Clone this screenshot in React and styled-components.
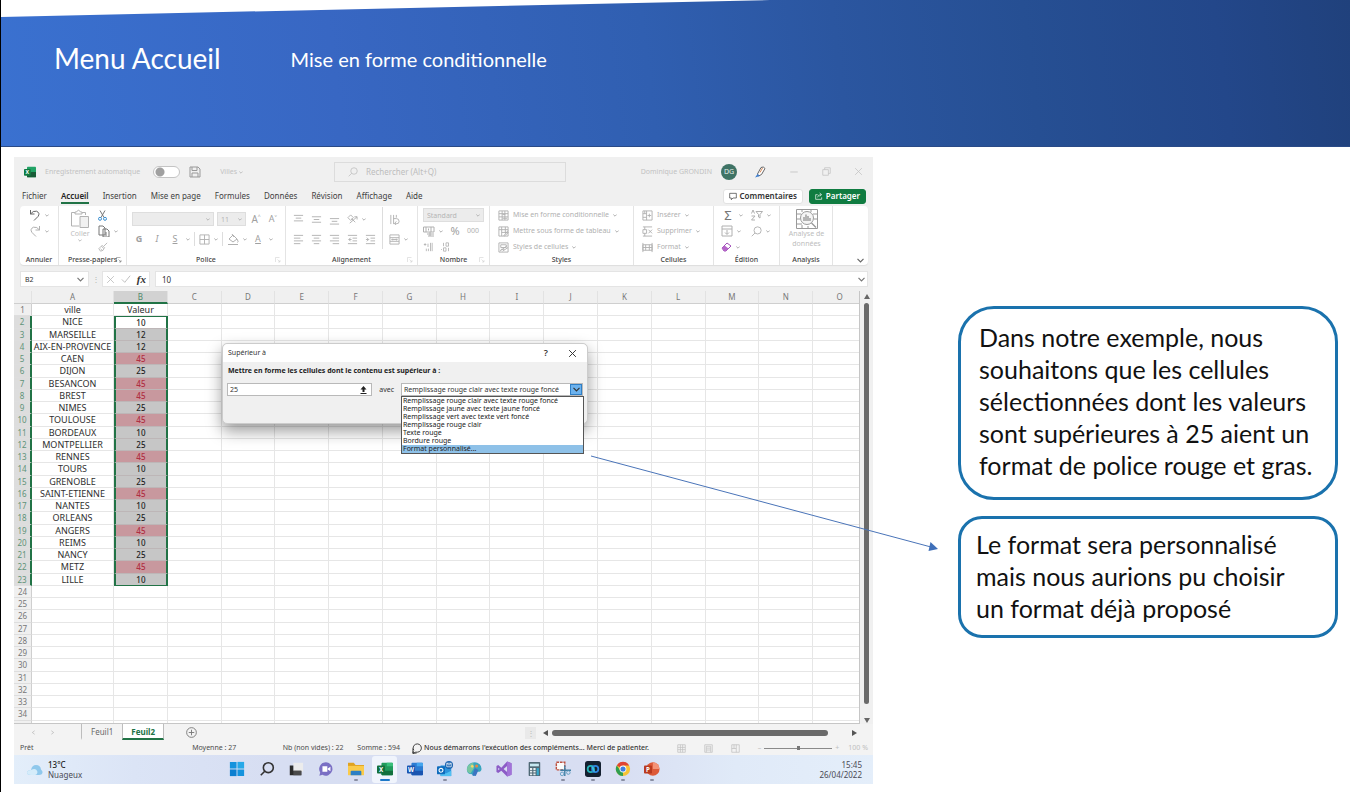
import React, { useState } from "react";
import styled, { createGlobalStyle } from "styled-components";

const GlobalStyle = createGlobalStyle`
  * {
    box-sizing: border-box;
  }
  body {
    margin: 0;
    background: #ffffff;
    font-family: "Noto Sans", "Open Sans", sans-serif;
  }
  button, input, select {
    font-family: inherit;
    margin: 0;
  }
`;

const Page = styled.div`
  min-height: 100vh;
  border-left: 1px solid #000000;
  overflow: hidden;
`;

const Header = styled.header`
  height: 147px;
  padding: 39px 53px 0;
  display: flex;
  align-items: flex-start;
  gap: 70px;
  color: #ffffff;
  font-family: Lato, "Open Sans", sans-serif;
  background: linear-gradient(
    83deg,
    #3a71d0 0%,
    #3867c3 25%,
    #305fb1 48%,
    #2b56a0 62%,
    #264f93 76%,
    #23478a 90%,
    #20417c 100%
  );
  border-bottom: 1px solid #2a4a86;
  clip-path: polygon(0 17px, 57% 0, 100% 0, 100% 100%, 0 100%);
`;

const Title = styled.h1`
  margin: 0;
  font-size: 28px;
  line-height: 38px;
  font-weight: 400;
`;

const Subtitle = styled.p`
  margin: 0;
  font-size: 20px;
  line-height: 40px;
`;

const Main = styled.main`
  display: grid;
  grid-template-columns: minmax(0, 859fr) minmax(0, 380fr);
  column-gap: 85px;
  padding: 10px 12px 8px 13px;
`;

/* Right side notes */

const Notes = styled.aside`
  padding-top: 149px;
  display: flex;
  flex-direction: column;
  gap: 16px;
`;

const Note = styled.p`
  margin: 0;
  padding: ${(props) => (props.$large ? "12px 16px 16px 18px" : "9px 15px 11px")};
  border: 3px solid #1a72ad;
  border-radius: ${(props) => (props.$large ? 36 : 24)}px;
  color: #111111;
  font-family: Lato, "Open Sans", sans-serif;
  font-size: 25px;
  line-height: 32px;
  white-space: nowrap;
`;

/* Excel window */

const Window = styled.section`
  background: #f0f0f0;
  color: #3b3b3b;
  font-size: 8px;
  line-height: 12px;
  white-space: nowrap;
  align-self: start;
`;

const TitleBar = styled.div`
  height: 29px;
  display: grid;
  grid-template-columns: 320fr 232fr 307fr;
  align-items: center;
  color: #c2c2c2;
  font-size: 7px;
`;

const TitleSide = styled.div`
  display: flex;
  align-items: center;
  gap: 9px;
  padding: 0 10px;
  justify-content: ${(props) => (props.$end ? "flex-end" : "flex-start")};
`;

const AutoSave = styled.label`
  display: flex;
  align-items: center;
  gap: 13px;
`;

const Toggle = styled.input`
  appearance: none;
  width: 27px;
  height: 12px;
  border: 1px solid #c4c4c4;
  border-radius: 6px;
  background: radial-gradient(circle at 6px 5px, #a0a0a0 4px, #ffffff 5px);
`;

const FileName = styled.span`
  margin-left: 10px;
`;

const Search = styled.label`
  height: 20px;
  display: flex;
  align-items: center;
  gap: 8px;
  padding: 0 13px;
  border: 1px solid #dcdcdc;
  input {
    flex: 1;
    min-width: 0;
    border: 0;
    padding: 0;
    background: none;
    font-size: 8px;
    outline: none;
  }
  input::placeholder {
    color: #bdbdbd;
  }
`;

const Avatar = styled.span`
  width: 16px;
  height: 16px;
  border-radius: 50%;
  background: #3f7365;
  color: #e6efec;
  text-align: center;
  line-height: 16px;
`;

const WindowButtons = styled.div`
  display: flex;
  gap: 23px;
  margin-left: 8px;
`;

const IconButton = styled.button`
  padding: 0;
  border: 0;
  background: none;
  color: inherit;
  display: flex;
  align-items: center;
  gap: 4px;
  font-size: inherit;
  line-height: inherit;
`;

const Tabs = styled.nav`
  height: 20px;
  padding: 0 7px 0 8px;
  display: flex;
  align-items: center;
  gap: 14px;
`;

const Tab = styled.a`
  color: ${(props) => (props.$active ? "#262626" : "#3f3f3f")};
  font-weight: ${(props) => (props.$active ? 600 : 400)};
  border-bottom: 2px solid ${(props) => (props.$active ? "#217346" : "transparent")};
  padding-top: 2px;
  text-decoration: none;
`;

const TabActions = styled.div`
  margin-left: auto;
  display: flex;
  gap: 6px;
`;

const ActionButton = styled.button`
  height: 15px;
  padding: 0 5px;
  display: flex;
  align-items: center;
  gap: 3px;
  border: 1px solid ${(props) => (props.$primary ? "#107c41" : "#e2e2e2")};
  border-radius: 3px;
  background: ${(props) => (props.$primary ? "#107c41" : "#ffffff")};
  color: ${(props) => (props.$primary ? "#ffffff" : "#333333")};
  font-size: 8px;
  line-height: 12px;
  font-weight: 600;
`;

const Ribbon = styled.div`
  height: 59px;
  margin: 0 5px 0 6px;
  display: grid;
  grid-template-columns:
    minmax(0, 39fr) minmax(0, 68fr) minmax(0, 159fr) minmax(0, 132fr) minmax(0, 72fr)
    minmax(0, 144fr) minmax(0, 80fr) minmax(0, 66fr) minmax(0, 53fr) minmax(0, 35fr);
  background: #ffffff;
  border-radius: 4px;
  box-shadow: 0 1px 1px #dddddd;
`;

const Group = styled.div`
  position: relative;
  display: flex;
  flex-direction: column;
  padding-top: 1px;
  color: #b0b0b0;
  border-right: ${(props) => (props.$last ? "0" : "1px solid #e4e4e4")};
`;

const GroupBody = styled.div`
  height: 48px;
  padding-left: ${(props) => props.$pad || 6}px;
  display: flex;
  gap: ${(props) => props.$gap || 6}px;
  font-size: 7px;
`;

const Rows = styled.div`
  display: flex;
  flex-direction: column;
  padding-top: ${(props) => (props.$tall ? 2 : 0)}px;
`;

const Row = styled.div`
  height: ${(props) => (props.$tall ? 20 : 16)}px;
  display: flex;
  align-items: center;
  gap: ${(props) => props.$gap || 4}px;
`;

const GroupLabel = styled.div`
  height: 10px;
  color: #444444;
  font-size: 7px;
  font-weight: 500;
  line-height: 10px;
  text-align: center;
`;

const Launcher = styled.span`
  position: absolute;
  right: 4px;
  bottom: 2px;
  display: flex;
  color: ${(props) => (props.$on ? "#666666" : "#c9c9c9")};
`;

const BigButton = styled.button`
  width: ${(props) => props.$width}px;
  padding: 2px 0 0;
  border: 0;
  background: none;
  color: #bdbdbd;
  display: flex;
  flex-direction: column;
  align-items: center;
  font-size: 7px;
  line-height: 10px;
`;

const Combo = styled.label`
  width: ${(props) => props.$width}px;
  height: 14px;
  padding: 0 3px;
  display: flex;
  align-items: center;
  border: 1px solid #dedede;
  background: #ececec;
  color: #b5b5b5;
  input {
    flex: 1;
    min-width: 0;
    padding: 0;
    border: 0;
    background: none;
    color: inherit;
    font-size: 7px;
  }
`;

const Letter = styled.span`
  width: 14px;
  text-align: center;
  font-size: ${(props) => props.$size || 9}px;
  color: ${(props) => (props.$dark ? "#777777" : "#a0a0a0")};
  font-weight: ${(props) => (props.$bold ? 700 : 400)};
  font-style: ${(props) => (props.$italic ? "italic" : "normal")};
  text-decoration: ${(props) => (props.$underline ? "underline" : "none")};
`;

const Divider = styled.span`
  width: 1px;
  height: ${(props) => props.$height}px;
  background: #dddddd;
`;

const FormulaBar = styled.div`
  height: 26px;
  padding: 6px 5px 4px 6px;
  display: flex;
  gap: 5px;
  align-items: stretch;
  color: #b5b5b5;
`;

const Dots = styled.span`
  width: 3px;
  line-height: 16px;
  display: flex;
  justify-content: center;
`;

const NameBox = styled.label`
  width: 69px;
  padding: 0 4px;
  display: flex;
  align-items: center;
  background: #ffffff;
  border: 1px solid #e4e4e4;
  color: #777777;
  input {
    flex: 1;
    min-width: 0;
    padding: 0;
    border: 0;
    font-size: 7px;
    color: #333333;
  }
`;

const FxBox = styled.div`
  width: 48px;
  display: flex;
  align-items: center;
  justify-content: space-around;
  background: #ffffff;
  border: 1px solid #e4e4e4;
  em {
    color: #333333;
    font-family: "Liberation Serif", serif;
    font-size: 11px;
    font-weight: 700;
  }
`;

const FormulaField = styled(NameBox)`
  flex: 1;
  padding: 0 2px 0 6px;
  input {
    font-size: 8px;
  }
`;

const SheetArea = styled.div`
  position: relative;
  height: 433px;
  display: flex;
`;

const GridClip = styled.div`
  flex: 1;
  min-width: 0;
  overflow: hidden;
  background: #ffffff;
  border-right: 1px solid #c6c6c6;
  border-bottom: 1px solid #c6c6c6;
`;

const Table = styled.table`
  width: calc(100% + 8px);
  table-layout: fixed;
  border-collapse: separate;
  border-spacing: 0;
  tbody tr {
    height: 12px;
  }
  tbody tr:nth-child(4n + 2) {
    height: 13px;
  }
`;

const Col = styled.col`
  width: ${(props) => props.$width}px;
`;

const ColHead = styled.th`
  height: 13px;
  padding: 0;
  background: ${(props) => (props.$selected ? "#d2d2d2" : "#f0f0f0")};
  border-right: 1px solid #e2e2e2;
  border-bottom: ${(props) => (props.$selected ? "2px solid #217346" : "1px solid #cfcfcf")};
  color: ${(props) => (props.$selected ? "#4f8a6b" : "#777777")};
  font-size: 8px;
  font-weight: 400;
  line-height: 10px;
`;

const RowHead = styled.th`
  padding: 0;
  background: ${(props) => (props.$selected ? "#dddddd" : "#f0f0f0")};
  border-right: ${(props) => (props.$selected ? "2px solid #217346" : "1px solid #cfcfcf")};
  border-bottom: 1px solid #dedede;
  color: ${(props) => (props.$selected ? "#5f9378" : "#777777")};
  font-size: 8px;
  font-weight: 400;
  line-height: 10px;
`;

const Cell = styled.td`
  padding: 0;
  border-right: 1px solid #e6e6e6;
  border-bottom: 1px solid #e6e6e6;
  color: #2e2e2e;
  font-size: ${(props) => (props.$text ? 9 : 8)}px;
  line-height: 10px;
  text-align: center;
`;

const cellFill = { first: "#ffffff", plain: "#c6c6c6", high: "#c8989e" };

const SelectedCell = styled(Cell)`
  background: ${(props) => cellFill[props.$kind]};
  color: ${(props) => (props.$kind === "high" ? "#b02f42" : "#222222")};
  font-weight: 500;
  border-left: 2px solid #217346;
  border-right: 2px solid #217346;
  border-top: ${(props) => (props.$kind === "first" ? "1px solid #217346" : "0")};
  border-bottom-color: ${(props) => (props.$end ? "#217346" : "#bdb6b7")};
`;

const VScroll = styled.div`
  width: 13px;
  padding: 3px 0 0;
  display: flex;
  flex-direction: column;
  align-items: center;
  gap: 3px;
  color: #666666;
`;

const VThumb = styled.span`
  width: 5px;
  height: 401px;
  margin-bottom: auto;
  border-radius: 3px;
  background: #6a6a6a;
`;

/* Dialog over the sheet */

const Dialog = styled.div`
  position: absolute;
  left: 208px;
  top: 52px;
  width: 366px;
  height: 81px;
  border: 1px solid #cccccc;
  border-radius: 5px;
  background: #f0f0f0;
  color: #333333;
  font-size: 7px;
  box-shadow: 0 7px 16px rgba(0, 0, 0, 0.4);
`;

const DialogTitle = styled.div`
  height: 18px;
  padding: 0 10px 0 5px;
  display: flex;
  align-items: center;
  gap: 20px;
  background: #ffffff;
  border-radius: 5px 5px 0 0;
  span {
    flex: 1;
  }
`;

const HelpButton = styled(IconButton)`
  font-size: 9px;
  font-weight: 600;
`;

const DialogText = styled.p`
  margin: 3px 5px 6px;
  color: #222222;
  font-weight: 700;
`;

const DialogRow = styled.form`
  padding: 0 4px;
  display: flex;
  align-items: center;
  gap: 7px;
`;

const Field = styled.label`
  width: ${(props) => props.$width}px;
  height: 13px;
  display: flex;
  align-items: stretch;
  background: #ffffff;
  border: 1px solid #b9b9b9;
  input,
  select {
    appearance: none;
    flex: 1;
    min-width: 0;
    padding: 0 2px;
    border: 0;
    background: none;
    color: #333333;
    font-size: 7px;
    line-height: 11px;
  }
`;

const FieldButton = styled.span`
  width: ${(props) => (props.$blue ? 12 : 16)}px;
  display: flex;
  align-items: center;
  justify-content: center;
  background: ${(props) => (props.$blue ? "#6cb2ee" : "transparent")};
  border: ${(props) => (props.$blue ? "1px solid #2f7fc6" : "0")};
`;

const Options = styled.ul`
  position: absolute;
  left: 178px;
  top: 52px;
  width: 183px;
  margin: 0;
  padding: 0;
  list-style: none;
  border: 1px solid #555555;
  background: #ffffff;
`;

const Option = styled.li`
  padding: 0 1px;
  line-height: 8px;
  color: #222222;
  background: ${(props) => (props.$active ? "#8ec1e8" : "transparent")};
`;

const Arrow = styled.svg`
  position: absolute;
  left: 577px;
  top: 163px;
  width: 348px;
  height: 98px;
`;

/* Bottom bars */

const SheetTabs = styled.div`
  height: 17px;
  display: grid;
  grid-template-columns: 511fr 348fr;
  background: #f3f3f3;
`;

const SheetList = styled.div`
  display: flex;
  align-items: center;
  padding-left: 16px;
  gap: 12px;
  color: #a9a9a9;
`;

const SheetButtons = styled.div`
  align-self: stretch;
  display: flex;
  margin: 0 10px 0 13px;
`;

const SheetTab = styled.button`
  margin: 0 0 1px;
  padding: 2px ${(props) => (props.$active ? 8 : 9)}px 0;
  border: 0;
  border-left: 1px solid #bdbdbd;
  border-right: ${(props) => (props.$active ? "1px solid #bdbdbd" : "0")};
  border-bottom: 2px solid ${(props) => (props.$active ? "#217346" : "transparent")};
  background: ${(props) => (props.$active ? "#ffffff" : "none")};
  color: ${(props) => (props.$active ? "#217346" : "#6a6a6a")};
  font-size: 8px;
  line-height: 12px;
  font-weight: ${(props) => (props.$active ? 700 : 400)};
`;

const HScroll = styled.div`
  display: flex;
  align-items: center;
  gap: 3px;
  padding-right: 15px;
  color: #555555;
`;

const HThumb = styled.span`
  flex: 1;
  height: 6px;
  margin-right: 21px;
  border-radius: 3px;
  background: #6a6a6a;
`;

const HGrip = styled.span`
  width: 11px;
  height: 12px;
  margin-right: 4px;
  background: #e9e9e9;
  color: #bbbbbb;
  text-align: center;
`;

const StatusBar = styled.div`
  height: 14px;
  padding-left: 6px;
  display: grid;
  grid-template-columns: 173fr 91fr 75fr 55fr 266fr 193fr;
  align-items: center;
  background: #f3f3f3;
  color: #4c4c4c;
  font-size: 7px;
`;

const StatusMessage = styled.span`
  display: flex;
  align-items: center;
  gap: 1px;
  font-weight: 500;
  color: #333333;
`;

const StatusTools = styled.div`
  display: flex;
  align-items: center;
  gap: 18px;
  padding-right: 5px;
  color: #c0c0c0;
`;

const Zoom = styled.label`
  flex: 1;
  display: flex;
  align-items: center;
  justify-content: flex-end;
  gap: 3px;
  input {
    appearance: none;
    width: 68px;
    height: 1px;
    background: #8a8a8a;
  }
  input::-webkit-slider-thumb {
    appearance: none;
    width: 3px;
    height: 4px;
    background: #777777;
  }
  output {
    margin-left: 6px;
  }
`;

const TaskBar = styled.footer`
  height: 29px;
  padding: 0 11px 0 12px;
  display: grid;
  grid-template-columns: 1fr auto 1fr;
  align-items: center;
  font-size: 8px;
  line-height: 10px;
  color: #4a4a55;
  background: linear-gradient(90deg, #e3eefa 0%, #dbe4f6 14%, #d7def2 30%, #d8def2 70%, #e0eaf8 84%, #e4eefa 100%);
`;

const Weather = styled.div`
  display: flex;
  align-items: center;
  gap: 4px;
  strong {
    display: block;
    font-weight: 500;
    color: #222222;
  }
`;

const Apps = styled.div`
  display: flex;
  gap: 5px;
`;

const AppButton = styled.button`
  width: 25px;
  height: 27px;
  margin-right: ${(props) => (props.$odd ? -1 : 0)}px;
  padding: 5px 0 0;
  border: 0;
  border-radius: 3px;
  display: flex;
  flex-direction: column;
  align-items: center;
  gap: 2px;
  background: ${(props) => (props.$active ? "#f0f4fc" : "none")};
  &::after {
    content: "";
    width: ${(props) => (props.$active ? 10 : 4)}px;
    height: 2px;
    border-radius: 1px;
    background: ${(props) => (props.$active ? "#1c78c8" : props.$open ? "#8a8fa3" : "transparent")};
  }
`;

const Clock = styled.time`
  text-align: right;
`;

const Caret = () => (
  <svg width="4" height="3" viewBox="0 0 4 3" fill="none" stroke="currentColor">
    <path d="M0.3 0.5 2 2.2 3.7 0.5" />
  </svg>
);

const Chevron = () => (
  <svg width="7" height="5" viewBox="0 0 7 5" fill="none" stroke="currentColor" strokeWidth="1.2">
    <path d="M0.5 0.8 3.5 3.8 6.5 0.8" />
  </svg>
);

const triangles = {
  up: "M3 0 6 5H0z",
  down: "M3 5 6 0H0z",
  left: "M0 3 5 0V6z",
  right: "M5 3 0 0V6z",
};

const Triangle = ({ dir }) => (
  <svg width="6" height="6" viewBox="0 0 6 6" fill="currentColor">
    <path d={triangles[dir]} />
  </svg>
);

const lines = {
  top: "M1 1.5H11M3 4.5H9M1 7.5H11",
  middle: "M1 3H11M3 6H9M1 9H11",
  bottom: "M1 5H11M3 8H9M1 11H11",
  alignLeft: "M1 1.5H11M1 4.5H8M1 7.5H11M1 10.5H8",
  alignCenter: "M1 1.5H11M3 4.5H9M1 7.5H11M3 10.5H9",
  alignRight: "M1 1.5H11M4 4.5H11M1 7.5H11M4 10.5H11",
  outdent: "M1 1.5H11M6 4.5H11M6 7.5H11M1 10.5H11M4 4 2 6 4 8M2 6H5",
  indent: "M1 1.5H11M6 4.5H11M6 7.5H11M1 10.5H11M2 4 4 6 2 8M1 6H4",
  orient: "M1 4 4 1 7 4 4 7zM3 10 11 3M11 3H8M11 3V6M5 5 9 9",
  wrap: "M2 1V11M5 1V11M5 5H8Q11 5 11 8T8 10.5H6M8 8 6 10.5 8 12M8 1V4",
  merge: "M1 1H11V11H1zM1 4H11M1 8H11M3 6H9M4 5 3 6 4 7M8 5 9 6 8 7",
  borders: "M1 1H11V11H1zM6 1V11M1 6H11",
  save: "M1 1H9L11 3V11H1zM3 1V4.5H8V1M3 11V7H9V11",
  undo: "M1.5 1V5H5.5M1.5 5Q4 1.5 7.5 2.2Q11.5 4 9 7.5L5 11.5",
  redo: "M10.5 1V5H6.5M10.5 5Q8 1.5 4.5 2.2Q0.5 4 3 7.5L7 11.5",
  copy: "M1 1H5L7 3V10H1zM5 4H9L11 6V12H5zM7 8H9M7 10H9",
  brush: "M11 1 7 5M5 4 8 7 7 8 4 5zM4 5 1 8 3 11 6 10 7 8M3 8 4.5 9.5",
  fill: "M2 6 6 2 10 6 6 9zM5 1 7 4M10 6Q12 9 10.5 9.5M1 11.5H11",
  money: "M0.5 2H11V7H0.5zM3 2V7M8 2V7M5.5 3.5V5.5M4 9H11M5 11H11M7 7V11",
  decMore: "M1 3H4M2.5 1.5V4.5M6 2V6M9 1V11M11 1V11M4 8V11M6.5 8V11",
  decLess: "M3 1V5M6 1V5H9V1H6M3 7V11H6V7zM9 7V11M1 9H0",
  cond: "M1 1H11V11H1zM1 4H11M1 7.5H11M4.5 1V11M7.5 1V11M5 5H8M5 9H10",
  table: "M1 1H11V11H1zM1 4H11M4 1V11M8 1V8M4 7H11M6 11 11 5M7 11 11.5 7",
  cellStyle: "M1 1H11V11H1zM3 3H9V6H3zM2 10 10 4M5 10 11 6M3 8H7",
  insert: "M1 1H11V11H1zM1 4H5M1 8H5M5 1V11M8 4V8M6 6H10M3 1V4",
  remove: "M1 1H11M1 11H11M1 4H5V8H1zM7 4 11 8M11 4 7 8M3 1V4M3 8V11",
  format: "M1 1V11M11 1V11M1 3H11V9H1zM4 3V9M8 3V9M1 6H11",
  fillDown: "M1 1H11V11H1zM1 4H11M6 5V9M4 7.5 6 9.5 8 7.5",
  comment: "M1 2H11V9H6L3.5 11.5V9H1z",
  share: "M4 4H1V11H10V8M4 8Q4 4 9 4M7 1.5 10 4 7 6.5",
  close: "M1.5 1.5 10.5 10.5M10.5 1.5 1.5 10.5",
  minimize: "M1.5 6H10.5",
  restore: "M1 3.5H8.5V11H1zM3.5 3.5V1H11V8.5H8.5",
  check: "M1 6.5 4.5 10 11 2",
  launcher: "M1 10V1H9M5 5 10 10M10 6V10H6",
  grid: "M1 1H11V11H1zM1 4.5H11M1 7.5H11M4.5 1V11M7.5 1V11",
  pageView: "M1 1H11V11H1zM3 3H9V11M3 3V11M3 5.5H9M3 8H9",
  breakView: "M1 11V1H11V11zM1 6H7V1M7 6V11M4 1V6",
  plus: "M6 3V9M3 6H9M11.3 6A5.3 5.3 0 1 1 0.7 6A5.3 5.3 0 1 1 11.3 6",
  chatLoad: "M2 8A4.5 4.5 0 1 1 6 10H4L1 11.5 1.5 9M1 6V11H5",
  prev: "M8 3 4 6 8 9",
  next: "M4 3 8 6 4 9",
};

const Line = ({ name, size = 10, width = 1, color = "currentColor" }) => (
  <svg width={size} height={size} viewBox="0 0 12 12" fill="none" stroke={color} strokeWidth={width}>
    <path d={lines[name]} />
  </svg>
);

const SearchIcon = ({ size = 10, color = "currentColor", width = 1 }) => (
  <svg width={size} height={size} viewBox="0 0 12 12" fill="none" stroke={color} strokeWidth={width}>
    <circle cx="7.2" cy="4.8" r="3.9" />
    <path d="M4.4 7.6 0.8 11.2" />
  </svg>
);

const Paste = () => (
  <svg width="20" height="20" viewBox="0 0 20 20" fill="none" stroke="#b2b2b2">
    <path d="M9 17H1.5V3.5H5M12 3.5H15.5V6M5 5V3H6.5Q8.5 -0.5 10.5 3H12V5z" />
    <path d="M10 7.5H18.5V18.5H10z" fill="#f1f1f1" />
  </svg>
);

const Scissors = () => (
  <svg width="9" height="11" viewBox="0 0 9 11" fill="none">
    <path d="M2 0.5 6 7.5M7 0.5 3 7.5" stroke="#777777" />
    <circle cx="2" cy="8.8" r="1.5" stroke="#3b8fd0" />
    <circle cx="7" cy="8.8" r="1.5" stroke="#3b8fd0" />
  </svg>
);

const Eraser = () => (
  <svg width="11" height="10" viewBox="0 0 11 10">
    <path d="M1 6 6 1 10 4 5 9H3z" fill="#ffffff" stroke="#a14fb8" />
    <path d="M1 6 3.5 3.5 7.5 6.5 5 9H3z" fill="#b565c9" />
  </svg>
);

const SortFilter = () => (
  <svg width="12" height="12" viewBox="0 0 12 12" fill="none" stroke="currentColor">
    <path d="M0.5 4.5 2 1 3.5 4.5M0.5 7H4L0.5 11H4M5 2.5H11.5L9 5.5V9L7.5 8V5.5z" />
  </svg>
);

const AnalyseIcon = () => (
  <svg width="22" height="20" viewBox="0 0 22 20" fill="none" stroke="#9a9a9a">
    <path d="M0.5 0.5H21.5V19.5H0.5zM0.5 5H5M0.5 10H4M0.5 15H6M17 5H21.5M18 10H21.5M6 0.5V3M15 0.5V3M6 16V19.5M12 17V19.5" />
    <circle cx="11" cy="9" r="6.5" fill="#f5f5f5" />
    <path d="M8 12V8M10 12V5.5M12 12V7M14 12V9M15.5 14 20 18.5" strokeWidth="1.4" />
  </svg>
);

const Pen = () => (
  <svg width="12" height="12" viewBox="0 0 12 12" fill="none">
    <path d="M3.5 8 7 1.5Q9.5 0 11 2.5L7.5 8.5 4.5 10z" fill="#ffffff" stroke="#666666" />
    <path d="M1 11.5 3.5 8 6 10z" fill="#3f7fd0" />
    <path d="M8.5 2 6 6.5" stroke="#d88a5a" />
  </svg>
);

const ExcelLogo = () => (
  <svg width="12" height="12" viewBox="0 0 16 16">
    <rect x="4" y="1" width="12" height="14" rx="1" fill="#21a366" />
    <path d="M10 8H16V15H4V11z" fill="#185c37" />
    <rect x="0" y="4" width="9" height="9" rx="1" fill="#107c41" />
    <text x="4.5" y="11" fontSize="7" fontWeight="700" textAnchor="middle" fill="#ffffff">X</text>
  </svg>
);

const OfficeIcon = ({ letter, dark, mid, light, round }) => (
  <>
    {round ? (
      <>
        <circle cx="10" cy="9" r="7.5" fill={mid} />
        <path d="M10 1.5A7.5 7.5 0 0 1 17.5 9H10z" fill={light} />
      </>
    ) : (
      <>
        <rect x="5" y="2" width="13" height="14" rx="1" fill={mid} />
        <path d="M11 2H17Q18 2 18 3V6H11z" fill={light} />
        <path d="M5 11H18V15Q18 16 17 16H6Q5 16 5 15z" fill={dark} />
      </>
    )}
    <rect x="0" y="5" width="9" height="9" rx="1" fill={dark} />
    <text x="4.5" y="12" fontSize="7" fontWeight="700" textAnchor="middle" fill="#ffffff">{letter}</text>
  </>
);

const apps = [
  {
    name: "Démarrer",
    art: (
      <>
        <path d="M1 1H8.5V8.5H1zM9.5 9.5H17V17H9.5z" fill="#1593dd" />
        <path d="M9.5 1H17V8.5H9.5z" fill="#27a9e8" />
        <path d="M1 9.5H8.5V17H1z" fill="#0c7fd0" />
      </>
    ),
  },
  {
    name: "Rechercher",
    art: (
      <g fill="none" stroke="#333333" strokeWidth="1.8">
        <circle cx="10.5" cy="7.5" r="5.6" />
        <path d="M6.5 11.5 2 16" />
      </g>
    ),
  },
  {
    name: "Bureaux",
    art: (
      <>
        <path d="M6 2H17V12H6z" fill="#ececec" />
        <path d="M2 5H6V11H15V16H2z" fill="#2c2c2c" />
        <path d="M6 11H15V16H6z" fill="#4a4a4a" />
      </>
    ),
  },
  {
    name: "Conversation",
    art: (
      <>
        <path d="M9 1.5A7.5 7.5 0 1 1 5 15.5L1.5 16.5 2.5 13A7.5 7.5 0 0 1 9 1.5z" fill="#7a6fc4" />
        <path d="M5 6H10.5V12H5zM11 8.5 14 6.5V11.5L11 9.5z" fill="#ffffff" />
      </>
    ),
  },
  {
    name: "Explorateur",
    open: true,
    art: (
      <>
        <path d="M0 2H6.5L8.5 4.5H18V8H0z" fill="#e0a321" />
        <path d="M0 5.5H18V16H0z" fill="#fbcb4a" />
        <path d="M3 16V12Q3 11 4 11H14Q15 11 15 12V16z" fill="#2b7fc4" />
      </>
    ),
  },
  {
    name: "Excel",
    open: true,
    active: true,
    art: <OfficeIcon letter="X" dark="#12703d" mid="#219b5c" light="#39bf7b" />,
  },
  {
    name: "Word",
    art: <OfficeIcon letter="W" dark="#1a54b0" mid="#2b7cd3" light="#44a5ee" />,
  },
  {
    name: "Outlook",
    open: true,
    art: (
      <>
        <path d="M4 5H16V17H4z" fill="#2b94dd" />
        <path d="M4 11 10 14 16 11V17H4z" fill="#51c0f2" />
        <rect x="0" y="6" width="9" height="9" rx="1" fill="#0f6cbd" />
        <circle cx="4.5" cy="10.5" r="2.2" fill="none" stroke="#ffffff" strokeWidth="1.2" />
        <circle cx="13.5" cy="4.5" r="4.5" fill="#155fae" />
        <path d="M11 2.5H16V6.5H11zM11 2.5 13.5 4.8 16 2.5" fill="none" stroke="#ffffff" strokeWidth="0.8" />
      </>
    ),
  },
  {
    name: "Paint 3D",
    art: (
      <>
        <path d="M1 9Q2 1.5 10 1.5Q17 2.5 17.5 9Q17 13 12 12L10 16Q8 18 7 15Q0.5 15 1 9z" fill="#37a5bd" />
        <path d="M1 9Q2 3 8 2L9 8 5 14Q1 13 1 9z" fill="#78c6a0" />
        <circle cx="12" cy="5.5" r="1.7" fill="#e58845" />
        <path d="M10 8 14 10 11 17 7 16z" fill="#3b75c1" />
        <circle cx="7" cy="6" r="1.5" fill="#f4d66a" />
      </>
    ),
  },
  {
    name: "Visual Studio",
    art: (
      <>
        <path
          d="M12.5 0.5 17.5 2.5V15.5L12.5 17.5 6 11 2.5 13.5 0.5 12.5V5.5L2.5 4.5 6 7.5zM12.5 5.5 8.5 9 12.5 12.5zM2.5 7.5V10.5L4.2 9z"
          fill="#8c5cc6"
          fillRule="evenodd"
        />
        <path d="M12.5 0.5 17.5 2.5V15.5L12.5 17.5z" fill="#a273d8" />
      </>
    ),
  },
  {
    name: "Calculatrice",
    art: (
      <>
        <rect x="3" y="1" width="13" height="16" rx="1" fill="#4f6875" />
        <path d="M4.5 3H14.5V6H4.5z" fill="#c5e7f0" />
        <path d="M4.5 8H7V10H4.5zM8.3 8H10.8V10H8.3zM4.5 11H7V13H4.5zM8.3 11H10.8V13H8.3zM4.5 14H7V16H4.5zM8.3 14H10.8V16H8.3z" fill="#e7eef1" />
        <path d="M12 8H14.5V16H12z" fill="#37a8cc" />
      </>
    ),
  },
  {
    name: "Capture",
    open: true,
    art: (
      <>
        <path d="M1.5 1.5H11V10H1.5z" fill="#fafafa" stroke="#bd5140" strokeDasharray="3 1" strokeWidth="1.6" />
        <path d="M11 5V17M6 10.5H18" stroke="#427fa4" strokeWidth="1.6" />
        <circle cx="8" cy="14.5" r="2" fill="none" stroke="#5b9bc0" />
        <circle cx="15" cy="13" r="2" fill="none" stroke="#5b9bc0" />
      </>
    ),
  },
  {
    name: "Webex",
    open: true,
    art: (
      <>
        <rect x="0" y="0" width="18" height="18" rx="3" fill="#142030" />
        <circle cx="6.5" cy="9" r="3.5" fill="none" stroke="#27b4b8" strokeWidth="2" />
        <circle cx="11.5" cy="9" r="3.5" fill="none" stroke="#2f86e0" strokeWidth="2" />
        <path d="M8 6.5Q9.5 9 10.5 12" fill="none" stroke="#3bc0dc" strokeWidth="1.8" />
      </>
    ),
  },
  {
    name: "Chrome",
    open: true,
    art: (
      <>
        <circle cx="9" cy="9" r="8" fill="#f6c336" />
        <path d="M9 9 2 5A8 8 0 0 1 16 5H9z" fill="#df4435" />
        <path d="M9 9 9 17A8 8 0 0 1 2 5L6 10.8z" fill="#2f9e50" />
        <circle cx="9" cy="9" r="3.8" fill="#ffffff" />
        <circle cx="9" cy="9" r="2.9" fill="#3f7fe0" />
      </>
    ),
  },
  {
    name: "PowerPoint",
    open: true,
    art: <OfficeIcon letter="P" dark="#b93a1f" mid="#dd5a38" light="#f49377" round />,
  },
];

const rows = [
  ["NICE", 10],
  ["MARSEILLE", 12],
  ["AIX-EN-PROVENCE", 12],
  ["CAEN", 45],
  ["DIJON", 25],
  ["BESANCON", 45],
  ["BREST", 45],
  ["NIMES", 25],
  ["TOULOUSE", 45],
  ["BORDEAUX", 10],
  ["MONTPELLIER", 25],
  ["RENNES", 45],
  ["TOURS", 10],
  ["GRENOBLE", 25],
  ["SAINT-ETIENNE", 45],
  ["NANTES", 10],
  ["ORLEANS", 25],
  ["ANGERS", 45],
  ["REIMS", 10],
  ["NANCY", 25],
  ["METZ", 45],
  ["LILLE", 10],
];

const letters = "ABCDEFGHIJKLMNO".split("");
const blankColumns = letters.slice(2);

const formats = [
  "Remplissage rouge clair avec texte rouge foncé",
  "Remplissage jaune avec texte jaune foncé",
  "Remplissage vert avec texte vert foncé",
  "Remplissage rouge clair",
  "Texte rouge",
  "Bordure rouge",
  "Format personnalisé...",
];

const menu = [
  "Fichier",
  "Accueil",
  "Insertion",
  "Mise en page",
  "Formules",
  "Données",
  "Révision",
  "Affichage",
  "Aide",
];

const Tool = ({ icon, label, size = 10, caret, children }) => (
  <IconButton aria-label={label || icon}>
    {children || <Line name={icon} size={size} />}
    {label && <span>{label}</span>}
    {caret && <Caret />}
  </IconButton>
);

const ExcelRibbon = () => (
  <Ribbon>
    <Group>
      <GroupBody $pad={9}>
        <Rows>
          <Row>
            <IconButton aria-label="Annuler">
              <Line name="undo" size={12} color="#666666" />
              <Caret />
            </IconButton>
          </Row>
          <Row>
            <Tool icon="redo" size={12} caret />
          </Row>
        </Rows>
      </GroupBody>
      <GroupLabel>Annuler</GroupLabel>
    </Group>
    <Group>
      <GroupBody $gap={3}>
        <BigButton $width={30}>
          <Paste />
          Coller
          <Caret />
        </BigButton>
        <Rows>
          <Row>
            <Tool icon="Couper">
              <Scissors />
            </Tool>
          </Row>
          <Row>
            <IconButton aria-label="Copier">
              <Line name="copy" size={12} color="#777777" />
              <Caret />
            </IconButton>
          </Row>
          <Row>
            <Tool icon="brush" />
          </Row>
        </Rows>
      </GroupBody>
      <GroupLabel>Presse-papiers</GroupLabel>
      <Launcher $on>
        <Line name="launcher" size={6} />
      </Launcher>
    </Group>
    <Group>
      <GroupBody $pad={5}>
        <Rows $tall>
          <Row $tall $gap={3}>
            <Combo $width={82}>
              <input aria-label="Police" readOnly />
              <Caret />
            </Combo>
            <Combo $width={29}>
              <input aria-label="Taille" value="11" readOnly />
              <Caret />
            </Combo>
            <Letter $size={10}>A˄</Letter>
            <Letter>A˅</Letter>
          </Row>
          <Row $tall $gap={4}>
            <Letter $bold>G</Letter>
            <Letter $italic>I</Letter>
            <Letter $underline>S</Letter>
            <Caret />
            <Divider $height={14} />
            <Tool icon="borders" caret size={11} />
            <Divider $height={14} />
            <Tool icon="fill" caret size={12} />
            <Letter $underline>A</Letter>
            <Caret />
          </Row>
        </Rows>
      </GroupBody>
      <GroupLabel>Police</GroupLabel>
      <Launcher>
        <Line name="launcher" size={6} />
      </Launcher>
    </Group>
    <Group>
      <GroupBody $pad={7}>
        <Rows $tall>
          <Row $tall $gap={7}>
            <Tool icon="top" size={11} />
            <Tool icon="middle" size={11} />
            <Tool icon="bottom" size={11} />
            <Tool icon="orient" size={11} caret />
          </Row>
          <Row $tall $gap={7}>
            <Tool icon="alignLeft" size={11} />
            <Tool icon="alignCenter" size={11} />
            <Tool icon="alignRight" size={11} />
            <Tool icon="outdent" size={11} />
            <Tool icon="indent" size={11} />
          </Row>
        </Rows>
        <Divider $height={42} />
        <Rows $tall>
          <Row $tall>
            <Tool icon="wrap" size={11} />
          </Row>
          <Row $tall>
            <Tool icon="merge" size={11} caret />
          </Row>
        </Rows>
      </GroupBody>
      <GroupLabel>Alignement</GroupLabel>
      <Launcher>
        <Line name="launcher" size={6} />
      </Launcher>
    </Group>
    <Group>
      <GroupBody $pad={5}>
        <Rows>
          <Row>
            <Combo $width={61}>
              <input aria-label="Format de nombre" value="Standard" readOnly />
              <Caret />
            </Combo>
          </Row>
          <Row $gap={5}>
            <Tool icon="money" size={12} caret />
            <Letter $size={11}>%</Letter>
            <span>000</span>
          </Row>
          <Row $gap={8}>
            <Tool icon="decMore" />
            <Tool icon="decLess" />
          </Row>
        </Rows>
      </GroupBody>
      <GroupLabel>Nombre</GroupLabel>
      <Launcher>
        <Line name="launcher" size={6} />
      </Launcher>
    </Group>
    <Group>
      <GroupBody $pad={8}>
        <Rows>
          <Row>
            <Tool icon="cond" size={11} label="Mise en forme conditionnelle" caret />
          </Row>
          <Row>
            <Tool icon="table" size={11} label="Mettre sous forme de tableau" caret />
          </Row>
          <Row>
            <Tool icon="cellStyle" size={11} label="Styles de cellules" caret />
          </Row>
        </Rows>
      </GroupBody>
      <GroupLabel>Styles</GroupLabel>
    </Group>
    <Group>
      <GroupBody $pad={8}>
        <Rows>
          <Row>
            <Tool icon="insert" size={11} label="Insérer" caret />
          </Row>
          <Row>
            <Tool icon="remove" size={11} label="Supprimer" caret />
          </Row>
          <Row>
            <Tool icon="format" size={11} label="Format" caret />
          </Row>
        </Rows>
      </GroupBody>
      <GroupLabel>Cellules</GroupLabel>
    </Group>
    <Group>
      <GroupBody $pad={7} $gap={8}>
        <Rows>
          <Row>
            <Letter $size={13} $dark>Σ</Letter>
            <Caret />
          </Row>
          <Row>
            <Tool icon="fillDown" size={12} caret />
          </Row>
          <Row>
            <Tool icon="Effacer" caret>
              <Eraser />
            </Tool>
          </Row>
        </Rows>
        <Rows>
          <Row>
            <Tool icon="Trier" caret>
              <SortFilter />
            </Tool>
          </Row>
          <Row>
            <Tool icon="Rechercher" caret>
              <SearchIcon size={11} />
            </Tool>
          </Row>
        </Rows>
      </GroupBody>
      <GroupLabel>Édition</GroupLabel>
    </Group>
    <Group>
      <GroupBody $pad={5}>
        <BigButton $width={43}>
          <AnalyseIcon />
          Analyse de
          <br />
          données
        </BigButton>
      </GroupBody>
      <GroupLabel>Analysis</GroupLabel>
    </Group>
    <Group $last>
      <Launcher $on>
        <Chevron />
      </Launcher>
    </Group>
  </Ribbon>
);

const Sheet = () => (
  <GridClip>
    <Table>
      <colgroup>
        <Col $width={18} />
        <Col $width={82} />
      </colgroup>
      <thead>
        <tr>
          <ColHead />
          {letters.map((letter) => (
            <ColHead key={letter} $selected={letter === "B"}>
              {letter}
            </ColHead>
          ))}
        </tr>
      </thead>
      <tbody>
        <tr>
          <RowHead>1</RowHead>
          <Cell $text>ville</Cell>
          <Cell $text>Valeur</Cell>
          {blankColumns.map((c) => (
            <Cell key={c} />
          ))}
        </tr>
        {rows.map(([city, value], i) => (
          <tr key={city}>
            <RowHead $selected>{i + 2}</RowHead>
            <Cell $text>{city}</Cell>
            <SelectedCell
              $kind={i === 0 ? "first" : value > 25 ? "high" : "plain"}
              $end={i === rows.length - 1}
            >
              {value}
            </SelectedCell>
            {blankColumns.map((c) => (
              <Cell key={c} />
            ))}
          </tr>
        ))}
        {Array.from({ length: 12 }, (_, i) => (
          <tr key={i}>
            <RowHead>{i + 24}</RowHead>
            {letters.map((c) => (
              <Cell key={c} />
            ))}
          </tr>
        ))}
      </tbody>
    </Table>
  </GridClip>
);

const RuleDialog = () => {
  const [limit, setLimit] = useState("25");
  const [format, setFormat] = useState(formats[0]);
  return (
    <Dialog role="dialog" aria-label="Supérieur à">
      <DialogTitle>
        <span>Supérieur à</span>
        <HelpButton>?</HelpButton>
        <IconButton aria-label="Fermer">
          <Line name="close" size={9} width={1.3} />
        </IconButton>
      </DialogTitle>
      <DialogText>Mettre en forme les cellules dont le contenu est supérieur à :</DialogText>
      <DialogRow>
        <Field $width={146}>
          <input aria-label="Valeur" value={limit} onChange={(e) => setLimit(e.target.value)} />
          <FieldButton>
            <svg width="7" height="8" viewBox="0 0 7 8" fill="#222222">
              <path d="M3.5 0 6.5 3.5H4.5V6H2.5V3.5H0.5zM0.5 7H6.5V8H0.5z" />
            </svg>
          </FieldButton>
        </Field>
        <label htmlFor="format">avec</label>
        <Field as="div" $width={183}>
          <select id="format" value={format} onChange={(e) => setFormat(e.target.value)}>
            {formats.map((name) => (
              <option key={name}>{name}</option>
            ))}
          </select>
          <FieldButton $blue>
            <Chevron />
          </FieldButton>
        </Field>
      </DialogRow>
      <Options>
        {formats.map((name, i) => (
          <Option key={name} $active={i === formats.length - 1}>
            {name}
          </Option>
        ))}
      </Options>
    </Dialog>
  );
};

const ExcelWindow = () => (
  <Window>
    <TitleBar>
      <TitleSide>
        <ExcelLogo />
        <AutoSave>
          Enregistrement automatique
          <Toggle type="checkbox" />
        </AutoSave>
        <Line name="save" size={12} color="#999999" />
        <FileName>
          Villes <Caret />
        </FileName>
      </TitleSide>
      <Search>
        <SearchIcon />
        <input placeholder="Rechercher (Alt+Q)" aria-label="Rechercher" />
      </Search>
      <TitleSide $end>
        Dominique GRONDIN
        <Avatar>DG</Avatar>
        <WindowButtons>
          <Pen />
          <IconButton aria-label="Réduire">
            <Line name="minimize" />
          </IconButton>
          <IconButton aria-label="Restaurer">
            <Line name="restore" size={9} />
          </IconButton>
          <IconButton aria-label="Fermer">
            <Line name="close" size={9} />
          </IconButton>
        </WindowButtons>
      </TitleSide>
    </TitleBar>
    <Tabs>
      {menu.map((name) => (
        <Tab key={name} href="#" $active={name === "Accueil"}>
          {name}
        </Tab>
      ))}
      <TabActions>
        <ActionButton>
          <Line name="comment" size={8} />
          Commentaires
        </ActionButton>
        <ActionButton $primary>
          <Line name="share" size={8} />
          Partager
        </ActionButton>
      </TabActions>
    </Tabs>
    <ExcelRibbon />
    <FormulaBar>
      <NameBox>
        <input aria-label="Zone Nom" defaultValue="B2" />
        <Chevron />
      </NameBox>
      <Dots>⋮</Dots>
      <FxBox>
        <Line name="close" size={9} />
        <Line name="check" size={10} />
        <em>fx</em>
      </FxBox>
      <FormulaField>
        <input aria-label="Formule" defaultValue="10" />
        <Chevron />
      </FormulaField>
    </FormulaBar>
    <SheetArea>
      <Sheet />
      <VScroll>
        <Triangle dir="up" />
        <VThumb />
        <Triangle dir="down" />
      </VScroll>
      <RuleDialog />
      <Arrow viewBox="0 0 348 98">
        <path d="M0 2 340 93" stroke="#4a74b8" fill="none" />
        <path d="M347 95 337.5 97 339.5 88z" fill="#3f6fb9" />
      </Arrow>
    </SheetArea>
    <SheetTabs>
      <SheetList>
        <Line name="prev" size={7} />
        <Line name="next" size={7} />
        <SheetButtons>
          <SheetTab>Feuil1</SheetTab>
          <SheetTab $active>Feuil2</SheetTab>
        </SheetButtons>
        <IconButton aria-label="Nouvelle feuille">
          <Line name="plus" size={11} color="#777777" />
        </IconButton>
      </SheetList>
      <HScroll>
        <HGrip>⋮</HGrip>
        <Triangle dir="left" />
        <HThumb />
        <Triangle dir="right" />
      </HScroll>
    </SheetTabs>
    <StatusBar>
      <span>Prêt</span>
      <span>Moyenne : 27</span>
      <span>Nb (non vides) : 22</span>
      <span>Somme : 594</span>
      <StatusMessage>
        <Line name="chatLoad" size={11} />
        Nous démarrons l'exécution des compléments... Merci de patienter.
      </StatusMessage>
      <StatusTools>
        <Line name="grid" size={9} />
        <Line name="pageView" size={9} />
        <Line name="breakView" size={9} />
        <Zoom>
          –
          <input type="range" min="0" max="200" defaultValue="100" aria-label="Zoom" />
          +<output>100 %</output>
        </Zoom>
      </StatusTools>
    </StatusBar>
    <TaskBar>
      <Weather>
        <svg width="18" height="14" viewBox="0 0 18 14">
          <path d="M5 12Q1 12 1 9.5 1.5 7 5 7 6 2 10 2 14.5 2 15 6.5 17 8 16.5 10 16 12 13 12z" fill="#8fc8ec" />
          <path d="M5 12Q1 12 1 9.5 1.5 7 5 7 10 4 11.5 9 11 12 9 12z" fill="#d5ecfa" />
        </svg>
        <span>
          <strong>13°C</strong>
          Nuageux
        </span>
      </Weather>
      <Apps>
        {apps.map(({ name, open, active, art }, i) => (
          <AppButton key={name} aria-label={name} $open={open} $active={active} $odd={i % 3 === 1}>
            <svg width="16" height="16" viewBox="0 0 18 18">
              {art}
            </svg>
          </AppButton>
        ))}
      </Apps>
      <Clock>
        15:45
        <br />
        26/04/2022
      </Clock>
    </TaskBar>
  </Window>
);

export default () => (
  <Page>
    <GlobalStyle />
    <Header>
      <Title>Menu Accueil</Title>
      <Subtitle>Mise en forme conditionnelle</Subtitle>
    </Header>
    <Main>
      <ExcelWindow />
      <Notes>
        <Note $large>
          Dans notre exemple, nous
          <br />
          souhaitons que les cellules
          <br />
          sélectionnées dont les valeurs
          <br />
          sont supérieures à 25 aient un
          <br />
          format de police rouge et gras.
        </Note>
        <Note>
          Le format sera personnalisé
          <br />
          mais nous aurions pu choisir
          <br />
          un format déjà proposé
        </Note>
      </Notes>
    </Main>
  </Page>
);
